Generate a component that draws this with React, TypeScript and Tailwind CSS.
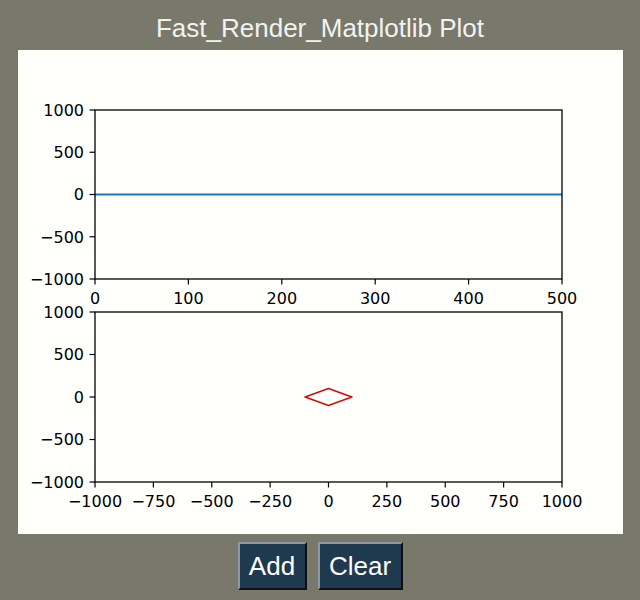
import React from 'react';

// plot panel geometry (px, relative to the white panel)
const PANEL_W = 605;
const PANEL_H = 484;
const AX_L = 77;
const AX_R = 544;

type Axis = { top: number; bottom: number; xTicks: number[]; xMin: number; xMax: number };

const fmt = (v: number) => (v < 0 ? `\u2212${Math.abs(v)}` : `${v}`);

const yTicks = [1000, 500, 0, -500, -1000];

const axes: Axis[] = [
  { top: 60, bottom: 229, xTicks: [0, 100, 200, 300, 400, 500], xMin: 0, xMax: 500 },
  { top: 262, bottom: 432, xTicks: [-1000, -750, -500, -250, 0, 250, 500, 750, 1000], xMin: -1000, xMax: 1000 },
];

const sx = (ax: Axis, v: number) => AX_L + ((v - ax.xMin) / (ax.xMax - ax.xMin)) * (AX_R - AX_L);
const sy = (ax: Axis, v: number) => ax.bottom - ((v + 1000) / 2000) * (ax.bottom - ax.top);

const AxesFrame: React.FC<{ ax: Axis }> = ({ ax }) => (
  <g>
    <rect x={AX_L} y={ax.top} width={AX_R - AX_L} height={ax.bottom - ax.top} fill="none" stroke="#000" strokeWidth={1.3} />
    {yTicks.map((t) => {
      const y = sy(ax, t);
      return (
        <g key={t}>
          <line x1={AX_L - 5.5} x2={AX_L} y1={y} y2={y} stroke="#000" strokeWidth={1.2} />
          <text x={AX_L - 11} y={y + 5.8} textAnchor="end" fontSize="16" fill="#000" fontFamily="'DejaVu Sans', sans-serif">
            {fmt(t)}
          </text>
        </g>
      );
    })}
    {ax.xTicks.map((t) => {
      const x = sx(ax, t);
      return (
        <g key={t}>
          <line x1={x} x2={x} y1={ax.bottom} y2={ax.bottom + 5.5} stroke="#000" strokeWidth={1.2} />
          <text x={x} y={ax.bottom + 24.5} textAnchor="middle" fontSize="16" fill="#000" fontFamily="'DejaVu Sans', sans-serif">
            {fmt(t)}
          </text>
        </g>
      );
    })}
  </g>
);

const PlotPanel: React.FC = () => {
  const [a1, a2] = axes;
  // diamond at (0,0), half-size 100 in data units
  const d = [
    [sx(a2, -100), sy(a2, 0)],
    [sx(a2, 0), sy(a2, 100)],
    [sx(a2, 100), sy(a2, 0)],
    [sx(a2, 0), sy(a2, -100)],
  ]
    .map((p) => p.join(','))
    .join(' ');

  return (
    <svg width={PANEL_W} height={PANEL_H} viewBox={`0 0 ${PANEL_W} ${PANEL_H}`} className="block">
      <line x1={AX_L} x2={AX_R} y1={sy(a1, 0)} y2={sy(a1, 0)} stroke="#1f77b4" strokeWidth={2.2} />
      <AxesFrame ax={a1} />
      <polygon points={d} fill="none" stroke="#cc1111" strokeWidth={1.8} strokeLinejoin="round" />
      <AxesFrame ax={a2} />
    </svg>
  );
};

export default function App() {
  return (
    <div className="w-[640px] h-[600px] bg-[#79796b] flex flex-col items-center" style={{ fontFamily: "'Liberation Sans', Arial, sans-serif" }}>
      <div className="h-[50px] w-full flex items-center justify-center pt-[6px]">
        <h1 className="text-[26px] leading-[26px] text-[#f2f2f0]">Fast_Render_Matplotlib Plot</h1>
      </div>
      <div className="w-[605px] h-[484px] bg-[#fffffb]">
        <PlotPanel />
      </div>
      <div className="mt-[8px] flex gap-[11px]">
        <button className="w-[69px] h-[48px] bg-[#1f3a4f] border-2 border-t-[#9096a8] border-l-[#9096a8] border-b-[#111] border-r-[#111] text-white text-[26px] leading-none">
          Add
        </button>
        <button className="w-[85px] h-[48px] bg-[#1f3a4f] border-2 border-t-[#9096a8] border-l-[#9096a8] border-b-[#111] border-r-[#111] text-white text-[26px] leading-none">
          Clear
        </button>
      </div>
    </div>
  );
}
